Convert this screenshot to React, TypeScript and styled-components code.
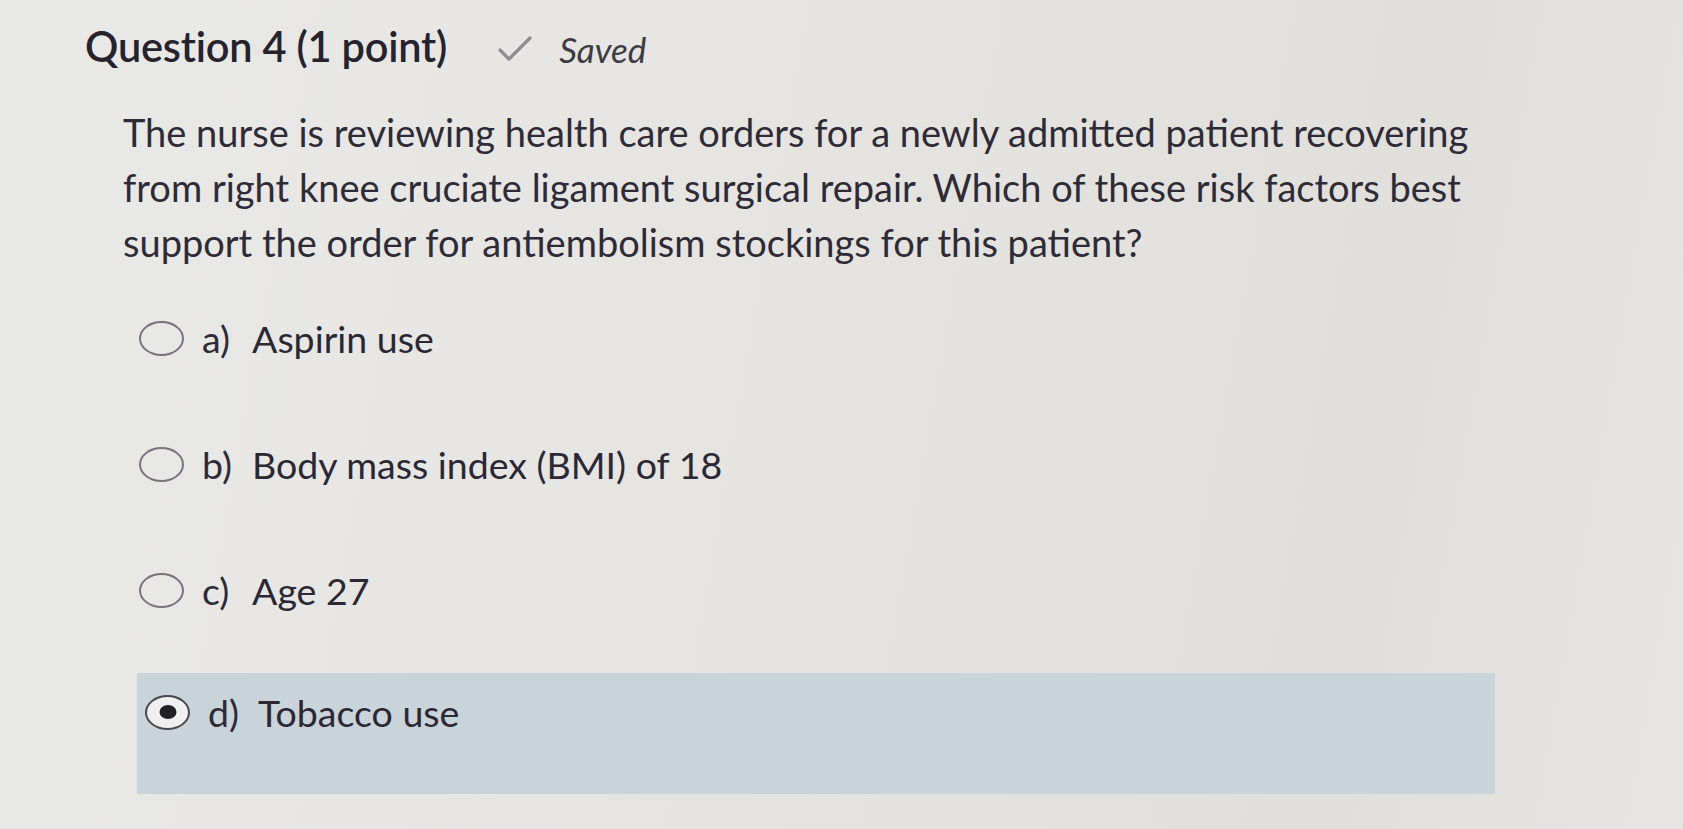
import React from "react";
import styled, { createGlobalStyle } from "styled-components";

const Global = createGlobalStyle`
  html, body { margin: 0; padding: 0; }
  body {
    font-family: Lato, "Open Sans", sans-serif;
    background: #e5e4e1;
  }
`;

const Page = styled.div`
  width: 1683px;
  height: 829px;
  box-sizing: border-box;
  overflow: hidden;
  padding: 16px 0 0 85px;
  background: linear-gradient(100deg, #e9e9e7 0%, #e5e4e1 45%, #e0dfdb 80%, #e6e5e3 100%);
  color: #2b2833;
`;

const Header = styled.div`
  display: flex;
  align-items: center;
  height: 60px;
`;

const Title = styled.h2`
  margin: 0;
  font-size: 41.5px;
  font-weight: 600;
  color: #26232c;
  letter-spacing: -0.2px;
`;

const Status = styled.div`
  display: flex;
  align-items: center;
  margin-left: 50px;
  gap: 26px;
  padding-top: 6px;
`;

const Saved = styled.span`
  font-style: italic;
  font-size: 35px;
  color: #3d3b42;
`;

const Prompt = styled.p`
  margin: 29px 0 0 38px;
  width: 1400px;
  font-size: 38px;
  line-height: 55px;
  color: #2e2b36;
`;

const Options = styled.div`
  display: flex;
  flex-direction: column;
  gap: 5px;
  margin: 25px 0 0 52px;
  width: 1358px;
`;

const Option = styled.label<{ $selected?: boolean }>`
  display: flex;
  align-items: center;
  box-sizing: border-box;
  height: 121px;
  padding: ${(p) => (p.$selected ? "16px 5px 59px 8px" : "20px 5px 55px 2px")};
  background: ${(p) => (p.$selected ? "#c9d3da" : "transparent")};
  cursor: pointer;
`;

const Radio = styled.span<{ $checked?: boolean }>`
  position: relative;
  flex: none;
  width: 45px;
  height: 35px;
  box-sizing: border-box;
  border-radius: 50%;
  border: 2px solid ${(p) => (p.$checked ? "#4a4850" : "#77747c")};
  background: ${(p) => (p.$checked ? "#efefef" : "transparent")};
  &::after {
    content: "";
    display: ${(p) => (p.$checked ? "block" : "none")};
    position: absolute;
    left: 50%;
    top: 50%;
    width: 17px;
    height: 14px;
    border-radius: 50%;
    background: #222126;
    transform: translate(-50%, -50%);
  }
`;

const Letter = styled.span`
  margin-left: 18px;
  width: 50px;
  font-size: 37.5px;
  color: #2e2b36;
`;

const OptionText = styled.span`
  font-size: 37.5px;
  color: #2b2833;
`;

const options = [
  { letter: "a)", text: "Aspirin use" },
  { letter: "b)", text: "Body mass index (BMI) of 18" },
  { letter: "c)", text: "Age 27" },
  { letter: "d)", text: "Tobacco use", selected: true },
];

export default function App() {
  return (
    <>
      <Global />
      <Page>
        <Header>
          <Title>Question 4 (1 point)</Title>
          <Status>
            <svg width="36" height="28" viewBox="0 0 36 28">
              <polyline
                points="3,15 12,24 33,3"
                fill="none"
                stroke="#8d8c90"
                strokeWidth="3.2"
                strokeLinecap="round"
                strokeLinejoin="round"
              />
            </svg>
            <Saved>Saved</Saved>
          </Status>
        </Header>
        <Prompt>
          The nurse is reviewing health care orders for a newly admitted patient recovering
          from right knee cruciate ligament surgical repair. Which of these risk factors best
          support the order for antiembolism stockings for this patient?
        </Prompt>
        <Options>
          {options.map((o) => (
            <Option key={o.letter} $selected={o.selected}>
              <Radio $checked={o.selected} />
              <Letter>{o.letter}</Letter>
              <OptionText>{o.text}</OptionText>
            </Option>
          ))}
        </Options>
      </Page>
    </>
  );
}
